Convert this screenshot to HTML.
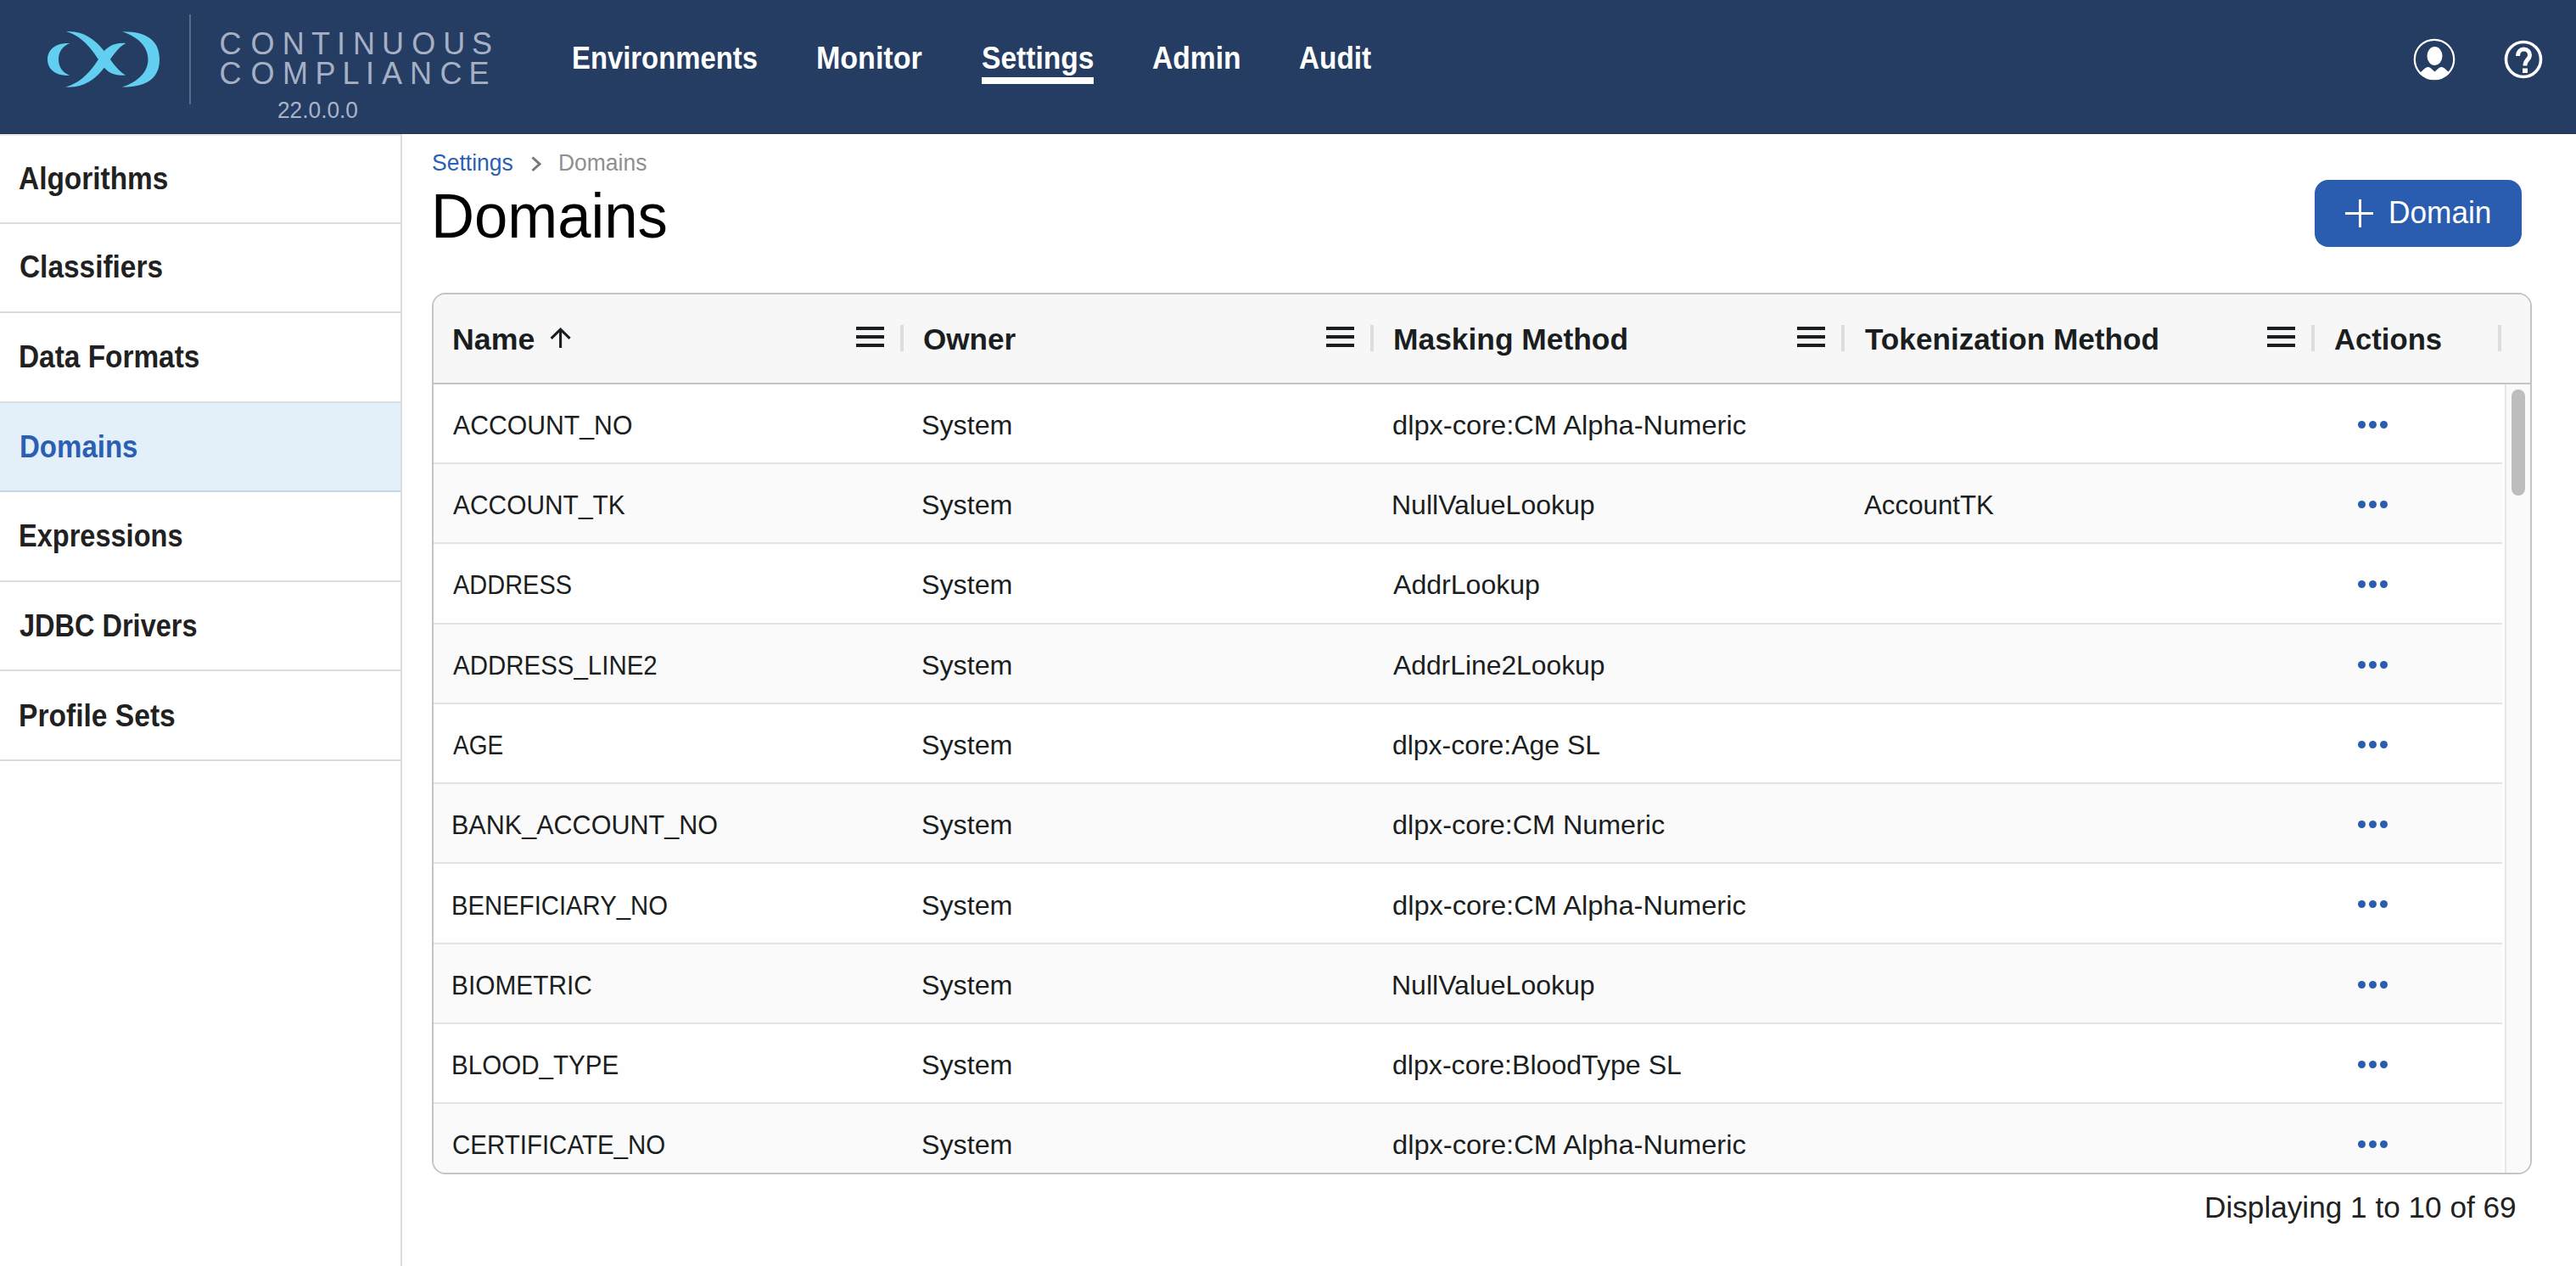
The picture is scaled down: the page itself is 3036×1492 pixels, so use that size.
<!DOCTYPE html>
<html><head><meta charset="utf-8">
<style>
*{margin:0;padding:0;box-sizing:border-box}
html,body{width:3036px;height:1492px;overflow:hidden;background:#fff;font-family:"Liberation Sans",sans-serif}
.a{position:absolute;white-space:nowrap;line-height:1}
.b{position:absolute}
</style></head><body><div id="root" style="position:absolute;left:0;top:0;width:3036px;height:1492px;overflow:hidden;transform-origin:0 0">

<div class="b" style="left:0;top:0;width:3036px;height:158px;background:#263d63"></div>
<div class="b" style="left:0;top:157px;width:3036px;height:1px;background:#1f3455"></div>
<svg class="b" style="left:40px;top:20px" width="170" height="100" viewBox="40 20 170 100">
<g fill="#62cff0">
<path d="M82.4,51 C65,50 56,59 56,70 C56,81 65,90 82.4,88.8 C74,86 69,79 69,70 C69,61 74,54 82.4,51 Z"/>
<path d="M78,37 C98,36 112,46 123.5,61 C131,71 138,83 148,88.5 C134,90 126,85 119,75 C110,60 98,43 78,37 Z"/>
<path d="M77,102.6 C98,104 112,94 123.5,79 C131,69 138,56 148.3,51 C134,50 126,55 119,65 C110,80 98,97 77,102.6 Z"/>
<path d="M144,37.3 C176,37 188,50 188,70 C188,90 176,102.8 144,102.6 C164,96 174.5,84 174.5,70 C174.5,56 164,44 144,37.3 Z"/>
</g></svg>
<div class="b" style="left:223px;top:17px;width:2px;height:106px;background:#5b6b87"></div>
<div class="a" style="left:326.83px;top:117px;font-size:27px;font-weight:normal;color:#a9b4c8;transform:scaleX(0.9729);transform-origin:0 0;">22.0.0.0</div>
<div class="a" style="left:246.40px;top:33.53px;width:50px;text-align:center;font-size:36px;color:#a5b0c4">C</div>
<div class="a" style="left:284.40px;top:33.53px;width:50px;text-align:center;font-size:36px;color:#a5b0c4">O</div>
<div class="a" style="left:320.70px;top:33.53px;width:50px;text-align:center;font-size:36px;color:#a5b0c4">N</div>
<div class="a" style="left:353.00px;top:33.53px;width:50px;text-align:center;font-size:36px;color:#a5b0c4">T</div>
<div class="a" style="left:376.90px;top:33.53px;width:50px;text-align:center;font-size:36px;color:#a5b0c4">I</div>
<div class="a" style="left:404.00px;top:33.53px;width:50px;text-align:center;font-size:36px;color:#a5b0c4">N</div>
<div class="a" style="left:438.00px;top:33.53px;width:50px;text-align:center;font-size:36px;color:#a5b0c4">U</div>
<div class="a" style="left:474.30px;top:33.53px;width:50px;text-align:center;font-size:36px;color:#a5b0c4">O</div>
<div class="a" style="left:510.20px;top:33.53px;width:50px;text-align:center;font-size:36px;color:#a5b0c4">U</div>
<div class="a" style="left:543.00px;top:33.53px;width:50px;text-align:center;font-size:36px;color:#a5b0c4">S</div>
<div class="a" style="left:246.40px;top:68.53px;width:50px;text-align:center;font-size:36px;color:#a5b0c4">C</div>
<div class="a" style="left:284.40px;top:68.53px;width:50px;text-align:center;font-size:36px;color:#a5b0c4">O</div>
<div class="a" style="left:323.00px;top:68.53px;width:50px;text-align:center;font-size:36px;color:#a5b0c4">M</div>
<div class="a" style="left:358.60px;top:68.53px;width:50px;text-align:center;font-size:36px;color:#a5b0c4">P</div>
<div class="a" style="left:388.40px;top:68.53px;width:50px;text-align:center;font-size:36px;color:#a5b0c4">L</div>
<div class="a" style="left:411.10px;top:68.53px;width:50px;text-align:center;font-size:36px;color:#a5b0c4">I</div>
<div class="a" style="left:437.00px;top:68.53px;width:50px;text-align:center;font-size:36px;color:#a5b0c4">A</div>
<div class="a" style="left:470.90px;top:68.53px;width:50px;text-align:center;font-size:36px;color:#a5b0c4">N</div>
<div class="a" style="left:506.40px;top:68.53px;width:50px;text-align:center;font-size:36px;color:#a5b0c4">C</div>
<div class="a" style="left:539.60px;top:68.53px;width:50px;text-align:center;font-size:36px;color:#a5b0c4">E</div>
<div class="a" style="left:673.90px;top:51px;font-size:36.5px;font-weight:bold;color:#ffffff;transform:scaleX(0.8996);transform-origin:0 0;">Environments</div>
<div class="a" style="left:962.14px;top:51px;font-size:36.5px;font-weight:bold;color:#ffffff;transform:scaleX(0.9321);transform-origin:0 0;">Monitor</div>
<div class="a" style="left:1156.98px;top:51px;font-size:36.5px;font-weight:bold;color:#ffffff;transform:scaleX(0.9197);transform-origin:0 0;">Settings</div>
<div class="a" style="left:1357.98px;top:51px;font-size:36.5px;font-weight:bold;color:#ffffff;transform:scaleX(0.9216);transform-origin:0 0;">Admin</div>
<div class="a" style="left:1531.19px;top:51px;font-size:36.5px;font-weight:bold;color:#ffffff;transform:scaleX(0.9130);transform-origin:0 0;">Audit</div>
<div class="b" style="left:1157px;top:91px;width:132px;height:8px;background:#fff"></div>
<svg class="b" style="left:2840px;top:40px" width="60" height="60" viewBox="0 0 60 60">
<defs><clipPath id="uc"><circle cx="29" cy="30" r="23"/></clipPath></defs>
<circle cx="29" cy="30" r="23.2" fill="none" stroke="#fff" stroke-width="2.2"/>
<ellipse cx="29.5" cy="26" rx="9" ry="11" fill="#fff"/>
<g clip-path="url(#uc)"><path d="M8,49.5 L18,40.5 C21,38.5 23,38.5 25,40.5 L29.5,44.5 L34,40.5 C36,38.5 38,38.5 41,40.5 L51,49.5 L51,60 L8,60 Z" fill="#fff"/></g>
</svg>
<svg class="b" style="left:2945px;top:42px" width="60" height="60" viewBox="0 0 60 60">
<circle cx="29" cy="28" r="20.5" fill="none" stroke="#fff" stroke-width="3.6"/>
<path d="M22.5,24 C22.5,19 25.5,16 29.5,16 C33.5,16 36.5,19 36.5,23 C36.5,28 31,29 31,34 L31,35.5" fill="none" stroke="#fff" stroke-width="5"/>
<rect x="28" y="38.5" width="6" height="5.5" fill="#fff"/>
</svg>
<div class="b" style="left:0;top:158px;width:472px;height:2px;background:#ebe9e6"></div>
<div class="b" style="left:472px;top:158px;width:2px;height:1334px;background:#dcdcdc"></div>
<div class="b" style="left:0;top:261.80px;width:472px;height:2px;background:#dcdcdc"></div>
<div class="a" style="left:22.27px;top:193px;font-size:36px;font-weight:bold;color:#212121;transform:scaleX(0.9282);transform-origin:0 0;">Algorithms</div>
<div class="b" style="left:0;top:367.25px;width:472px;height:2px;background:#dcdcdc"></div>
<div class="a" style="left:22.97px;top:297px;font-size:36px;font-weight:bold;color:#212121;transform:scaleX(0.9278);transform-origin:0 0;">Classifiers</div>
<div class="b" style="left:0;top:472.70px;width:472px;height:2px;background:#dcdcdc"></div>
<div class="a" style="left:22.05px;top:403px;font-size:36px;font-weight:bold;color:#212121;transform:scaleX(0.9273);transform-origin:0 0;">Data Formats</div>
<div class="b" style="left:0;top:474.70px;width:472px;height:103.45px;background:#e3eff9"></div>
<div class="b" style="left:0;top:578.15px;width:472px;height:2px;background:#c9d5e1"></div>
<div class="a" style="left:22.97px;top:509px;font-size:36px;font-weight:bold;color:#2b5fb3;transform:scaleX(0.9174);transform-origin:0 0;">Domains</div>
<div class="b" style="left:0;top:683.60px;width:472px;height:2px;background:#dcdcdc"></div>
<div class="a" style="left:22.19px;top:614px;font-size:36px;font-weight:bold;color:#212121;transform:scaleX(0.9038);transform-origin:0 0;">Expressions</div>
<div class="b" style="left:0;top:789.05px;width:472px;height:2px;background:#dcdcdc"></div>
<div class="a" style="left:23.10px;top:720px;font-size:36px;font-weight:bold;color:#212121;transform:scaleX(0.9026);transform-origin:0 0;">JDBC Drivers</div>
<div class="b" style="left:0;top:894.50px;width:472px;height:2px;background:#dcdcdc"></div>
<div class="a" style="left:22.13px;top:826px;font-size:36px;font-weight:bold;color:#212121;transform:scaleX(0.9328);transform-origin:0 0;">Profile Sets</div>
<div class="a" style="left:508.92px;top:179px;font-size:27px;font-weight:normal;color:#2b5fb3;transform:scaleX(0.9823);transform-origin:0 0;">Settings</div>
<svg class="b" style="left:620px;top:178px" width="24" height="28" viewBox="0 0 24 28">
<path d="M7.5,7.5 L16,15.3 L7.5,23" fill="none" stroke="#777" stroke-width="3"/></svg>
<div class="a" style="left:657.54px;top:179px;font-size:27px;font-weight:normal;color:#8f8f8f;transform:scaleX(0.9798);transform-origin:0 0;">Domains</div>
<div class="a" style="left:508.27px;top:218px;font-size:74px;font-weight:normal;color:#000000;transform:scaleX(0.9548);transform-origin:0 0;">Domains</div>
<div class="b" style="left:2728px;top:212px;width:244px;height:79px;background:#2a5db0;border-radius:16px"></div>
<div class="b" style="left:2764px;top:250px;width:33px;height:3px;background:#fff"></div>
<div class="b" style="left:2779.5px;top:235px;width:3px;height:33px;background:#fff"></div>
<div class="a" style="left:2815.06px;top:233px;font-size:36px;font-weight:normal;color:#ffffff;transform:scaleX(0.9790);transform-origin:0 0;">Domain</div>
<div class="b" style="left:509px;top:345px;width:2475px;height:1039px;border:2px solid #c4c4c4;border-radius:16px;overflow:hidden;background:#fff">
<div class="b" style="left:0;top:0;width:100%;height:104px;background:#f7f7f7"></div>
<div class="b" style="left:0;top:104px;width:100%;height:2px;background:#c3c5c8"></div>
<div class="a" style="left:21.96px;top:35px;font-size:35px;font-weight:bold;color:#1b1e21;transform:scaleX(1.0207);transform-origin:0 0;">Name</div>
<div class="b" style="left:498.00px;top:38px;width:33px;height:3.7px;background:#1b1e21"></div>
<div class="b" style="left:498.00px;top:48px;width:33px;height:3.7px;background:#1b1e21"></div>
<div class="b" style="left:498.00px;top:58px;width:33px;height:3.7px;background:#1b1e21"></div>
<div class="b" style="left:550.00px;top:36px;width:4px;height:31px;background:#dcdedd"></div>
<div class="a" style="left:576.50px;top:35px;font-size:35px;font-weight:bold;color:#1b1e21;transform:scaleX(1.0028);transform-origin:0 0;">Owner</div>
<div class="b" style="left:1052.33px;top:38px;width:33px;height:3.7px;background:#1b1e21"></div>
<div class="b" style="left:1052.33px;top:48px;width:33px;height:3.7px;background:#1b1e21"></div>
<div class="b" style="left:1052.33px;top:58px;width:33px;height:3.7px;background:#1b1e21"></div>
<div class="b" style="left:1104.33px;top:36px;width:4px;height:31px;background:#dcdedd"></div>
<div class="a" style="left:1130.68px;top:35px;font-size:35px;font-weight:bold;color:#1b1e21;transform:scaleX(1.0104);transform-origin:0 0;">Masking Method</div>
<div class="b" style="left:1606.66px;top:38px;width:33px;height:3.7px;background:#1b1e21"></div>
<div class="b" style="left:1606.66px;top:48px;width:33px;height:3.7px;background:#1b1e21"></div>
<div class="b" style="left:1606.66px;top:58px;width:33px;height:3.7px;background:#1b1e21"></div>
<div class="b" style="left:1658.66px;top:36px;width:4px;height:31px;background:#dcdedd"></div>
<div class="a" style="left:1686.80px;top:35px;font-size:35px;font-weight:bold;color:#1b1e21;transform:scaleX(1.0044);transform-origin:0 0;">Tokenization Method</div>
<div class="b" style="left:2160.99px;top:38px;width:33px;height:3.7px;background:#1b1e21"></div>
<div class="b" style="left:2160.99px;top:48px;width:33px;height:3.7px;background:#1b1e21"></div>
<div class="b" style="left:2160.99px;top:58px;width:33px;height:3.7px;background:#1b1e21"></div>
<div class="b" style="left:2212.99px;top:36px;width:4px;height:31px;background:#dcdedd"></div>
<div class="a" style="left:2239.51px;top:35px;font-size:35px;font-weight:bold;color:#1b1e21;transform:scaleX(0.9905);transform-origin:0 0;">Actions</div>
<div class="b" style="left:2433px;top:36px;width:4px;height:31px;background:#dcdedd"></div>
<svg class="b" style="left:134px;top:36px" width="32" height="32" viewBox="0 0 32 32">
<path d="M4.6,15.8 L15.6,5.2 L26.6,15.8 M15.6,5.5 L15.6,27" fill="none" stroke="#1b1e21" stroke-width="3.1"/></svg>
<div class="b" style="left:0;top:106.00px;width:2438px;height:94.00px;background:#fefefe"></div>
<div class="b" style="left:0;top:198.00px;width:2438px;height:2px;background:#dfe3ea"></div>
<div class="a" style="left:22.80px;top:139px;font-size:30.5px;font-weight:normal;color:#1b1e21;transform:scaleX(0.9901);transform-origin:0 0;">ACCOUNT_NO</div>
<div class="a" style="left:574.89px;top:139px;font-size:30.5px;font-weight:normal;color:#1b1e21;transform:scaleX(1.0561);transform-origin:0 0;">System</div>
<div class="a" style="left:1130.23px;top:139px;font-size:30.5px;font-weight:normal;color:#1b1e21;transform:scaleX(1.0698);transform-origin:0 0;">dlpx-core:CM Alpha-Numeric</div>
<div class="b" style="left:2268.00px;top:148.90px;width:9px;height:9px;border-radius:50%;background:#2a5db0"></div>
<div class="b" style="left:2281.10px;top:148.90px;width:9px;height:9px;border-radius:50%;background:#2a5db0"></div>
<div class="b" style="left:2294.20px;top:148.90px;width:9px;height:9px;border-radius:50%;background:#2a5db0"></div>
<div class="b" style="left:0;top:200.25px;width:2438px;height:94.00px;background:#fafafa"></div>
<div class="b" style="left:0;top:292.25px;width:2438px;height:2px;background:#dfe3ea"></div>
<div class="a" style="left:22.80px;top:233px;font-size:30.5px;font-weight:normal;color:#1b1e21;transform:scaleX(0.9806);transform-origin:0 0;">ACCOUNT_TK</div>
<div class="a" style="left:574.89px;top:233px;font-size:30.5px;font-weight:normal;color:#1b1e21;transform:scaleX(1.0561);transform-origin:0 0;">System</div>
<div class="a" style="left:1129.20px;top:233px;font-size:30.5px;font-weight:normal;color:#1b1e21;transform:scaleX(1.0493);transform-origin:0 0;">NullValueLookup</div>
<div class="a" style="left:1686.40px;top:233px;font-size:30.5px;font-weight:normal;color:#1b1e21;transform:scaleX(1.0255);transform-origin:0 0;">AccountTK</div>
<div class="b" style="left:2268.00px;top:243.15px;width:9px;height:9px;border-radius:50%;background:#2a5db0"></div>
<div class="b" style="left:2281.10px;top:243.15px;width:9px;height:9px;border-radius:50%;background:#2a5db0"></div>
<div class="b" style="left:2294.20px;top:243.15px;width:9px;height:9px;border-radius:50%;background:#2a5db0"></div>
<div class="b" style="left:0;top:294.50px;width:2438px;height:94.00px;background:#fefefe"></div>
<div class="b" style="left:0;top:386.50px;width:2438px;height:2px;background:#dfe3ea"></div>
<div class="a" style="left:22.80px;top:327px;font-size:30.5px;font-weight:normal;color:#1b1e21;transform:scaleX(0.9500);transform-origin:0 0;">ADDRESS</div>
<div class="a" style="left:574.89px;top:327px;font-size:30.5px;font-weight:normal;color:#1b1e21;transform:scaleX(1.0561);transform-origin:0 0;">System</div>
<div class="a" style="left:1131.30px;top:327px;font-size:30.5px;font-weight:normal;color:#1b1e21;transform:scaleX(1.0515);transform-origin:0 0;">AddrLookup</div>
<div class="b" style="left:2268.00px;top:337.40px;width:9px;height:9px;border-radius:50%;background:#2a5db0"></div>
<div class="b" style="left:2281.10px;top:337.40px;width:9px;height:9px;border-radius:50%;background:#2a5db0"></div>
<div class="b" style="left:2294.20px;top:337.40px;width:9px;height:9px;border-radius:50%;background:#2a5db0"></div>
<div class="b" style="left:0;top:388.75px;width:2438px;height:94.00px;background:#fafafa"></div>
<div class="b" style="left:0;top:480.75px;width:2438px;height:2px;background:#dfe3ea"></div>
<div class="a" style="left:22.80px;top:422px;font-size:30.5px;font-weight:normal;color:#1b1e21;transform:scaleX(0.9661);transform-origin:0 0;">ADDRESS_LINE2</div>
<div class="a" style="left:574.89px;top:422px;font-size:30.5px;font-weight:normal;color:#1b1e21;transform:scaleX(1.0561);transform-origin:0 0;">System</div>
<div class="a" style="left:1131.30px;top:422px;font-size:30.5px;font-weight:normal;color:#1b1e21;transform:scaleX(1.0433);transform-origin:0 0;">AddrLine2Lookup</div>
<div class="b" style="left:2268.00px;top:431.65px;width:9px;height:9px;border-radius:50%;background:#2a5db0"></div>
<div class="b" style="left:2281.10px;top:431.65px;width:9px;height:9px;border-radius:50%;background:#2a5db0"></div>
<div class="b" style="left:2294.20px;top:431.65px;width:9px;height:9px;border-radius:50%;background:#2a5db0"></div>
<div class="b" style="left:0;top:483.00px;width:2438px;height:94.00px;background:#fefefe"></div>
<div class="b" style="left:0;top:575.00px;width:2438px;height:2px;background:#dfe3ea"></div>
<div class="a" style="left:22.80px;top:516px;font-size:30.5px;font-weight:normal;color:#1b1e21;transform:scaleX(0.9190);transform-origin:0 0;">AGE</div>
<div class="a" style="left:574.89px;top:516px;font-size:30.5px;font-weight:normal;color:#1b1e21;transform:scaleX(1.0561);transform-origin:0 0;">System</div>
<div class="a" style="left:1130.25px;top:516px;font-size:30.5px;font-weight:normal;color:#1b1e21;transform:scaleX(1.0470);transform-origin:0 0;">dlpx-core:Age SL</div>
<div class="b" style="left:2268.00px;top:525.90px;width:9px;height:9px;border-radius:50%;background:#2a5db0"></div>
<div class="b" style="left:2281.10px;top:525.90px;width:9px;height:9px;border-radius:50%;background:#2a5db0"></div>
<div class="b" style="left:2294.20px;top:525.90px;width:9px;height:9px;border-radius:50%;background:#2a5db0"></div>
<div class="b" style="left:0;top:577.25px;width:2438px;height:94.00px;background:#fafafa"></div>
<div class="b" style="left:0;top:669.25px;width:2438px;height:2px;background:#dfe3ea"></div>
<div class="a" style="left:20.80px;top:610px;font-size:30.5px;font-weight:normal;color:#1b1e21;transform:scaleX(1.0013);transform-origin:0 0;">BANK_ACCOUNT_NO</div>
<div class="a" style="left:574.89px;top:610px;font-size:30.5px;font-weight:normal;color:#1b1e21;transform:scaleX(1.0561);transform-origin:0 0;">System</div>
<div class="a" style="left:1130.24px;top:610px;font-size:30.5px;font-weight:normal;color:#1b1e21;transform:scaleX(1.0586);transform-origin:0 0;">dlpx-core:CM Numeric</div>
<div class="b" style="left:2268.00px;top:620.15px;width:9px;height:9px;border-radius:50%;background:#2a5db0"></div>
<div class="b" style="left:2281.10px;top:620.15px;width:9px;height:9px;border-radius:50%;background:#2a5db0"></div>
<div class="b" style="left:2294.20px;top:620.15px;width:9px;height:9px;border-radius:50%;background:#2a5db0"></div>
<div class="b" style="left:0;top:671.50px;width:2438px;height:94.00px;background:#fefefe"></div>
<div class="b" style="left:0;top:763.50px;width:2438px;height:2px;background:#dfe3ea"></div>
<div class="a" style="left:20.88px;top:705px;font-size:30.5px;font-weight:normal;color:#1b1e21;transform:scaleX(0.9603);transform-origin:0 0;">BENEFICIARY_NO</div>
<div class="a" style="left:574.89px;top:705px;font-size:30.5px;font-weight:normal;color:#1b1e21;transform:scaleX(1.0561);transform-origin:0 0;">System</div>
<div class="a" style="left:1130.23px;top:705px;font-size:30.5px;font-weight:normal;color:#1b1e21;transform:scaleX(1.0691);transform-origin:0 0;">dlpx-core:CM Alpha-Numeric</div>
<div class="b" style="left:2268.00px;top:714.40px;width:9px;height:9px;border-radius:50%;background:#2a5db0"></div>
<div class="b" style="left:2281.10px;top:714.40px;width:9px;height:9px;border-radius:50%;background:#2a5db0"></div>
<div class="b" style="left:2294.20px;top:714.40px;width:9px;height:9px;border-radius:50%;background:#2a5db0"></div>
<div class="b" style="left:0;top:765.75px;width:2438px;height:94.00px;background:#fafafa"></div>
<div class="b" style="left:0;top:857.75px;width:2438px;height:2px;background:#dfe3ea"></div>
<div class="a" style="left:20.84px;top:799px;font-size:30.5px;font-weight:normal;color:#1b1e21;transform:scaleX(0.9783);transform-origin:0 0;">BIOMETRIC</div>
<div class="a" style="left:574.89px;top:799px;font-size:30.5px;font-weight:normal;color:#1b1e21;transform:scaleX(1.0561);transform-origin:0 0;">System</div>
<div class="a" style="left:1129.20px;top:799px;font-size:30.5px;font-weight:normal;color:#1b1e21;transform:scaleX(1.0493);transform-origin:0 0;">NullValueLookup</div>
<div class="b" style="left:2268.00px;top:808.65px;width:9px;height:9px;border-radius:50%;background:#2a5db0"></div>
<div class="b" style="left:2281.10px;top:808.65px;width:9px;height:9px;border-radius:50%;background:#2a5db0"></div>
<div class="b" style="left:2294.20px;top:808.65px;width:9px;height:9px;border-radius:50%;background:#2a5db0"></div>
<div class="b" style="left:0;top:860.00px;width:2438px;height:94.00px;background:#fefefe"></div>
<div class="b" style="left:0;top:952.00px;width:2438px;height:2px;background:#dfe3ea"></div>
<div class="a" style="left:20.86px;top:893px;font-size:30.5px;font-weight:normal;color:#1b1e21;transform:scaleX(0.9700);transform-origin:0 0;">BLOOD_TYPE</div>
<div class="a" style="left:574.89px;top:893px;font-size:30.5px;font-weight:normal;color:#1b1e21;transform:scaleX(1.0561);transform-origin:0 0;">System</div>
<div class="a" style="left:1130.25px;top:893px;font-size:30.5px;font-weight:normal;color:#1b1e21;transform:scaleX(1.0528);transform-origin:0 0;">dlpx-core:BloodType SL</div>
<div class="b" style="left:2268.00px;top:902.90px;width:9px;height:9px;border-radius:50%;background:#2a5db0"></div>
<div class="b" style="left:2281.10px;top:902.90px;width:9px;height:9px;border-radius:50%;background:#2a5db0"></div>
<div class="b" style="left:2294.20px;top:902.90px;width:9px;height:9px;border-radius:50%;background:#2a5db0"></div>
<div class="b" style="left:0;top:954.25px;width:2438px;height:94.00px;background:#fafafa"></div>
<div class="a" style="left:21.83px;top:987px;font-size:30.5px;font-weight:normal;color:#1b1e21;transform:scaleX(0.9667);transform-origin:0 0;">CERTIFICATE_NO</div>
<div class="a" style="left:574.89px;top:987px;font-size:30.5px;font-weight:normal;color:#1b1e21;transform:scaleX(1.0561);transform-origin:0 0;">System</div>
<div class="a" style="left:1130.23px;top:987px;font-size:30.5px;font-weight:normal;color:#1b1e21;transform:scaleX(1.0691);transform-origin:0 0;">dlpx-core:CM Alpha-Numeric</div>
<div class="b" style="left:2268.00px;top:997.15px;width:9px;height:9px;border-radius:50%;background:#2a5db0"></div>
<div class="b" style="left:2281.10px;top:997.15px;width:9px;height:9px;border-radius:50%;background:#2a5db0"></div>
<div class="b" style="left:2294.20px;top:997.15px;width:9px;height:9px;border-radius:50%;background:#2a5db0"></div>
<div class="b" style="left:2441px;top:106px;width:30px;height:931px;background:#fafafa;border-left:2px solid #e6e6e6"></div>
<div class="b" style="left:2449px;top:112px;width:16px;height:125px;background:#bdbdbd;border-radius:8px"></div>
</div>
<div class="a" style="left:2597.73px;top:1406px;font-size:35.5px;font-weight:normal;color:#222222;transform:scaleX(0.9910);transform-origin:0 0;">Displaying 1 to 10 of 69</div>
</div><script>(function(){var w=window.innerWidth||3036;var s=w/3036;if(Math.abs(s-1)>0.002){document.getElementById("root").style.transform="scale("+s+")";}})();</script></body></html>
